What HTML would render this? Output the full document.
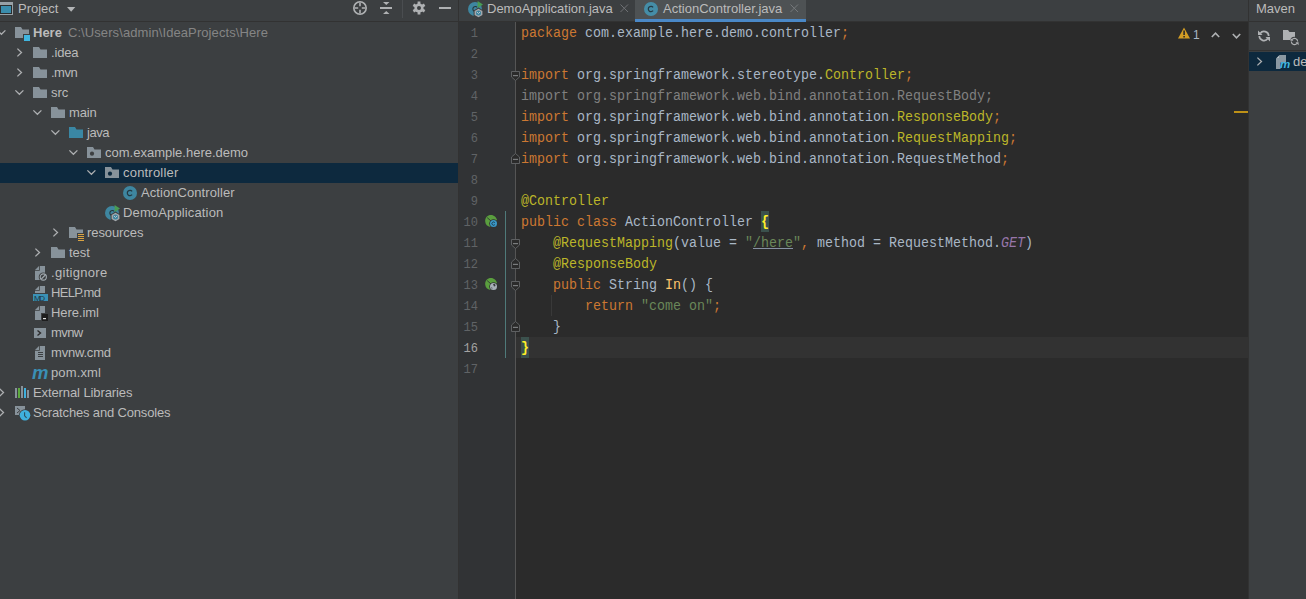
<!DOCTYPE html>
<html><head><meta charset="utf-8">
<style>
*{margin:0;padding:0;box-sizing:border-box}
html,body{width:1306px;height:599px;overflow:hidden;background:#3C3F41;font-family:"Liberation Sans",sans-serif;font-size:13px;color:#BBBBBB;position:relative}
.a{position:absolute}
.t{position:absolute;height:20px;line-height:20px;white-space:nowrap;color:#BBBBBB}
.vl{position:absolute;background:#323232;width:1px}
.hl{position:absolute;background:#323232;height:1px}
.code{position:absolute;left:521px;transform-origin:0 4.5px;transform:scaleY(1.13);font-family:"Liberation Mono",monospace;font-size:13.333px;white-space:pre;height:21px;line-height:21px;color:#A9B7C6}
.ln{position:absolute;left:459px;width:19px;padding-top:2px;text-align:right;font-family:"Liberation Mono",monospace;font-size:12px;height:21px;line-height:21px;color:#606366}
.k{color:#CC7832}.an{color:#BBB529}.s{color:#6A8759}.g{color:#808080}.m{color:#FFC66D}.st{color:#9876AA;font-style:italic}
u{text-decoration:underline}
</style></head><body>
<div class="hl" style="left:0;top:21px;width:458px"></div>
<div class="vl" style="left:458px;top:0;height:599px"></div>

<svg class="a" style="left:0;top:0" width="14" height="16"><rect x="0" y="2" width="13" height="13" fill="#97A0A6"/><rect x="0" y="5" width="12" height="9" fill="#2B2D2E"/><rect x="1" y="6" width="10" height="7" fill="#3A8DAD"/></svg>
<div class="a" style="left:18px;top:0;line-height:18px;color:#BBBBBB">Project</div>
<svg class="a" style="left:67px;top:7px" width="10" height="6"><path d="M0 0 H8.3 L4.15 4.7 Z" fill="#B2B4B6"/></svg>
<svg class="a" style="left:353px;top:1px" width="15" height="15"><circle cx="7" cy="7" r="6.2" fill="none" stroke="#AFB1B3" stroke-width="1.6"/><path d="M7 1.5 V5.2 M7 8.8 V12.5 M1.5 7 H5.2 M8.8 7 H12.5" stroke="#AFB1B3" stroke-width="1.6"/></svg>
<svg class="a" style="left:380px;top:0px" width="13" height="15"><rect x="0" y="7" width="12" height="2" fill="#AFB1B3"/><path d="M3 2 H9.5 L6.25 5 Z M3 14 H9.5 L6.25 11 Z" fill="#AFB1B3"/></svg>
<div class="a" style="left:402px;top:0;width:1px;height:18px;background:#4A4D50"></div>
<svg class="a" style="left:412px;top:1px" width="14" height="14"><g fill="#AFB1B3"><circle cx="7" cy="7" r="4.6"/><rect x="5.6" y="0.5" width="2.8" height="13"/><rect x="5.6" y="0.5" width="2.8" height="13" transform="rotate(60 7 7)"/><rect x="5.6" y="0.5" width="2.8" height="13" transform="rotate(120 7 7)"/></g><circle cx="7" cy="7" r="2" fill="#3C3F41"/></svg>
<div class="a" style="left:439px;top:7px;width:12px;height:2px;background:#AFB1B3"></div>

<svg class="a" style="left:-5px;top:29px" width="12" height="7"><path d="M2.4 1.4 L6.4 5.3 L10.4 1.4" fill="none" stroke="#AEB0B2" stroke-width="1.3"/></svg><svg class="a" style="left:15px;top:27px" width="16" height="14"><path d="M0 0 H6 L7.5 2.5 H14 V11 H0 Z" fill="#87929A"/><rect x="8" y="7" width="8" height="8" fill="#3C3F41"/><rect x="9" y="8" width="6" height="6" fill="#40B6E0"/></svg><div class="t" style="left:33px;top:23px;letter-spacing:0px"><b style="color:#BBBBBB">Here</b><span style="color:#858585;margin-left:6px;letter-spacing:0.09px">C:\Users\admin\IdeaProjects\Here</span></div>
<svg class="a" style="left:16px;top:47px" width="8" height="11"><path d="M1.4 1.6 L5.5 5.5 L1.4 9.4" fill="none" stroke="#AEB0B2" stroke-width="1.3"/></svg><svg class="a" style="left:33px;top:47px" width="16" height="14"><path d="M0 0 H6 L7.5 2.5 H14 V11 H0 Z" fill="#87929A"/></svg><div class="t" style="left:51px;top:43px;letter-spacing:-0.15px">.idea</div>
<svg class="a" style="left:16px;top:67px" width="8" height="11"><path d="M1.4 1.6 L5.5 5.5 L1.4 9.4" fill="none" stroke="#AEB0B2" stroke-width="1.3"/></svg><svg class="a" style="left:33px;top:67px" width="16" height="14"><path d="M0 0 H6 L7.5 2.5 H14 V11 H0 Z" fill="#87929A"/></svg><div class="t" style="left:51px;top:63px;letter-spacing:-0.5px">.mvn</div>
<svg class="a" style="left:13px;top:89px" width="12" height="7"><path d="M2.4 1.4 L6.4 5.3 L10.4 1.4" fill="none" stroke="#AEB0B2" stroke-width="1.3"/></svg><svg class="a" style="left:33px;top:87px" width="16" height="14"><path d="M0 0 H6 L7.5 2.5 H14 V11 H0 Z" fill="#87929A"/></svg><div class="t" style="left:51px;top:83px;letter-spacing:0px">src</div>
<svg class="a" style="left:31px;top:109px" width="12" height="7"><path d="M2.4 1.4 L6.4 5.3 L10.4 1.4" fill="none" stroke="#AEB0B2" stroke-width="1.3"/></svg><svg class="a" style="left:51px;top:107px" width="16" height="14"><path d="M0 0 H6 L7.5 2.5 H14 V11 H0 Z" fill="#87929A"/></svg><div class="t" style="left:69px;top:103px;letter-spacing:-0.13px">main</div>
<svg class="a" style="left:49px;top:129px" width="12" height="7"><path d="M2.4 1.4 L6.4 5.3 L10.4 1.4" fill="none" stroke="#AEB0B2" stroke-width="1.3"/></svg><svg class="a" style="left:69px;top:127px" width="16" height="14"><path d="M0 0 H6 L7.5 2.5 H14 V11 H0 Z" fill="#3A87A4"/></svg><div class="t" style="left:87px;top:123px;letter-spacing:-0.43px">java</div>
<svg class="a" style="left:67px;top:149px" width="12" height="7"><path d="M2.4 1.4 L6.4 5.3 L10.4 1.4" fill="none" stroke="#AEB0B2" stroke-width="1.3"/></svg><svg class="a" style="left:87px;top:147px" width="16" height="14"><path d="M0 0 H6 L7.5 2.5 H14 V11 H0 Z" fill="#87929A"/><circle cx="5" cy="6.7" r="2.1" fill="#3C3F41"/></svg><div class="t" style="left:105px;top:143px;letter-spacing:0px">com.example.here.demo</div>
<div class="a" style="left:0;top:163px;width:458px;height:20px;background:#0D293E"></div><svg class="a" style="left:85px;top:169px" width="12" height="7"><path d="M2.4 1.4 L6.4 5.3 L10.4 1.4" fill="none" stroke="#AEB0B2" stroke-width="1.3"/></svg><svg class="a" style="left:105px;top:167px" width="16" height="14"><path d="M0 0 H6 L7.5 2.5 H14 V11 H0 Z" fill="#87929A"/><circle cx="5" cy="6.7" r="2.1" fill="#0D293E"/></svg><div class="t" style="left:123px;top:163px;letter-spacing:0.2px">controller</div>
<svg class="a" style="left:123px;top:186px" width="14" height="14"><circle cx="7" cy="7" r="7" fill="#40B6E0" fill-opacity="0.6"/><path d="M9.1 5.3 A2.7 2.7 0 1 0 9.1 8.7" fill="none" stroke="#1F2C33" stroke-opacity="0.85" stroke-width="1.2"/></svg><div class="t" style="left:141px;top:183px;letter-spacing:0.07px">ActionController</div>
<svg class="a" style="left:105px;top:205px" width="18" height="18"><circle cx="7" cy="8" r="7" fill="#40B6E0" fill-opacity="0.6"/><path d="M9.2 6.3 A2.5 2.5 0 1 0 9.2 9.7" fill="none" stroke="#253539" stroke-width="1.1"/><path d="M9.6 0 L15 3.6 L9.6 7.2 Z" fill="#499C54"/><path d="M10.5 6.6 L15.4 9.4 L15.4 14.6 L10.5 17.4 L5.6 14.6 L5.6 9.4 Z" fill="#3C3F41"/><path d="M10.5 7.8 L14.4 10 L14.4 14 L10.5 16.2 L6.6 14 L6.6 10 Z" fill="#A3A8AC"/><circle cx="10.5" cy="12" r="2.5" fill="#3D85A0"/><path d="M9 11 Q10.5 14 12 11" fill="none" stroke="#C9CDD0" stroke-width="0.9"/></svg><div class="t" style="left:123px;top:203px;letter-spacing:0.14px">DemoApplication</div>
<svg class="a" style="left:52px;top:227px" width="8" height="11"><path d="M1.4 1.6 L5.5 5.5 L1.4 9.4" fill="none" stroke="#AEB0B2" stroke-width="1.3"/></svg><svg class="a" style="left:69px;top:227px" width="16" height="14"><path d="M0 0 H6 L7.5 2.5 H14 V11 H0 Z" fill="#87929A"/><rect x="8" y="6" width="8" height="8" fill="#3C3F41"/><path d="M9 7.5 H15 M9 9.5 H15 M9 11.5 H15 M9 13.5 H15" stroke="#D9A343" stroke-width="1"/></svg><div class="t" style="left:87px;top:223px;letter-spacing:-0.08px">resources</div>
<svg class="a" style="left:34px;top:247px" width="8" height="11"><path d="M1.4 1.6 L5.5 5.5 L1.4 9.4" fill="none" stroke="#AEB0B2" stroke-width="1.3"/></svg><svg class="a" style="left:51px;top:247px" width="16" height="14"><path d="M0 0 H6 L7.5 2.5 H14 V11 H0 Z" fill="#87929A"/></svg><div class="t" style="left:69px;top:243px;letter-spacing:0px">test</div>
<svg class="a" style="left:35px;top:266px" width="16" height="16"><path d="M0 4 L4 0 V4 Z" fill="#87929A"/><path d="M4.8 0 H10 V14 H0 V4.8 H4.8 Z" fill="#87929A"/><circle cx="8.3" cy="11" r="4.6" fill="#3C3F41"/><circle cx="8.3" cy="11" r="3.1" fill="none" stroke="#A0A8AE" stroke-width="1.1"/><path d="M6.3 13 L10.3 9" stroke="#A0A8AE" stroke-width="1.1"/></svg><div class="t" style="left:51px;top:263px;letter-spacing:0.3px">.gitignore</div>
<svg class="a" style="left:35px;top:286px" width="16" height="16"><path d="M0 4 L4 0 V4 Z" fill="#87929A"/><path d="M4.8 0 H10 V14 H0 V4.8 H4.8 Z" fill="#87929A"/><rect x="-2" y="7" width="16" height="9" fill="#3C3F41"/></svg><svg class="a" style="left:33px;top:294px" width="16" height="8"><rect x="0" y="0" width="15" height="7" fill="#3A91B6"/><text x="1" y="6.6" font-size="8" font-family="Liberation Sans" fill="#1D3440" textLength="11">MD</text></svg><div class="t" style="left:51px;top:283px;letter-spacing:-0.67px">HELP.md</div>
<svg class="a" style="left:35px;top:306px" width="16" height="16"><path d="M0 4 L4 0 V4 Z" fill="#87929A"/><path d="M4.8 0 H10 V14 H0 V4.8 H4.8 Z" fill="#87929A"/><rect x="6" y="7" width="8" height="9" fill="#3C3F41"/><rect x="7" y="8" width="6" height="7" fill="#1E1E1E"/><rect x="8" y="12" width="3" height="1.2" fill="#E0E0E0"/></svg><div class="t" style="left:51px;top:303px;letter-spacing:-0.08px">Here.iml</div>
<svg class="a" style="left:34px;top:328px" width="14" height="12"><rect x="0" y="0" width="12" height="10" fill="#87929A"/><path d="M3.5 2.5 L6.5 5 L3.5 7.5" fill="none" stroke="#2B2B2B" stroke-width="1.4"/></svg><div class="t" style="left:51px;top:323px;letter-spacing:-0.57px">mvnw</div>
<svg class="a" style="left:35px;top:346px" width="16" height="16"><path d="M0 4 L4 0 V4 Z" fill="#87929A"/><path d="M4.8 0 H10 V14 H0 V4.8 H4.8 Z" fill="#87929A"/><path d="M3 6.5 H8 M3 8.5 H8 M3 10.5 H8" stroke="#3C3F41" stroke-width="1"/></svg><div class="t" style="left:51px;top:343px;letter-spacing:-0.2px">mvnw.cmd</div>
<div class="a" style="left:32px;top:363px;font-family:'Liberation Sans';font-style:italic;font-weight:bold;font-size:18.5px;line-height:20px;color:#3A8FB5">m</div><div class="t" style="left:51px;top:363px;letter-spacing:0.12px">pom.xml</div>
<svg class="a" style="left:-2px;top:387px" width="8" height="11"><path d="M1.4 1.6 L5.5 5.5 L1.4 9.4" fill="none" stroke="#AEB0B2" stroke-width="1.3"/></svg><svg class="a" style="left:15px;top:386px" width="16" height="14"><rect x="0" y="2" width="2" height="10" fill="#87929A"/><rect x="3" y="2" width="2" height="10" fill="#5DAA3E"/><rect x="6" y="0" width="2" height="12" fill="#87929A"/><rect x="9" y="2" width="2" height="10" fill="#3FB0DD"/><rect x="12" y="4" width="2" height="8" fill="#87929A"/></svg><div class="t" style="left:33px;top:383px;letter-spacing:-0.1px">External Libraries</div>
<svg class="a" style="left:-2px;top:407px" width="8" height="11"><path d="M1.4 1.6 L5.5 5.5 L1.4 9.4" fill="none" stroke="#AEB0B2" stroke-width="1.3"/></svg><svg class="a" style="left:15px;top:405px" width="17" height="17"><rect x="0" y="1" width="10" height="9" fill="#87929A"/><path d="M2 3 L5 5.5 L2 8" fill="none" stroke="#3C3F41" stroke-width="1"/><circle cx="10" cy="10.3" r="6.1" fill="#3C3F41"/><circle cx="10" cy="10.3" r="5.3" fill="#3FB0DD"/><path d="M9.6 7.3 V10.8 L11.6 12.8" fill="none" stroke="#2B4F5E" stroke-width="1.1"/></svg><div class="t" style="left:33px;top:403px;letter-spacing:-0.16px">Scratches and Consoles</div>
<div class="a" style="left:459px;top:0;width:789px;height:21px;background:#3C3F41"></div>
<div class="hl" style="left:459px;top:21px;width:789px"></div>

<div class="a" style="left:635px;top:0;width:171px;height:19px;background:#4E5254"></div>
<div class="a" style="left:635px;top:19px;width:171px;height:3px;background:#4A88C7"></div>
<svg class="a" style="left:468px;top:1px" width="18" height="18"><circle cx="7" cy="8" r="7" fill="#40B6E0" fill-opacity="0.6"/><path d="M9.2 6.3 A2.5 2.5 0 1 0 9.2 9.7" fill="none" stroke="#253539" stroke-width="1.1"/><path d="M9.6 0 L15 3.6 L9.6 7.2 Z" fill="#499C54"/><path d="M10.5 6.6 L15.4 9.4 L15.4 14.6 L10.5 17.4 L5.6 14.6 L5.6 9.4 Z" fill="#3C3F41"/><path d="M10.5 7.8 L14.4 10 L14.4 14 L10.5 16.2 L6.6 14 L6.6 10 Z" fill="#A3A8AC"/><circle cx="10.5" cy="12" r="2.5" fill="#3D85A0"/><path d="M9 11 Q10.5 14 12 11" fill="none" stroke="#C9CDD0" stroke-width="0.9"/></svg>
<div class="a" style="left:487px;top:0;line-height:18px;color:#BBBBBB">DemoApplication.java</div>
<svg class="a" style="left:620px;top:4px" width="9" height="9"><path d="M0.5 0.5 L8 8 M8 0.5 L0.5 8" stroke="#6E7174" stroke-width="1"/></svg>
<svg class="a" style="left:644px;top:2px" width="14" height="14"><circle cx="7" cy="7" r="7" fill="#40B6E0" fill-opacity="0.6"/><path d="M9.1 5.3 A2.7 2.7 0 1 0 9.1 8.7" fill="none" stroke="#1F2C33" stroke-opacity="0.85" stroke-width="1.2"/></svg>
<div class="a" style="left:663px;top:0;line-height:18px;color:#BBBBBB">ActionController.java</div>
<svg class="a" style="left:790px;top:4px" width="9" height="9"><path d="M0.5 0.5 L8 8 M8 0.5 L0.5 8" stroke="#75787B" stroke-width="1"/></svg>

<div class="a" style="left:459px;top:22px;width:56px;height:577px;background:#313335"></div>
<div class="a" style="left:515px;top:22px;width:1px;height:577px;background:#555555"></div>
<div class="a" style="left:516px;top:22px;width:732px;height:577px;background:#2B2B2B"></div>
<div class="a" style="left:516px;top:337px;width:732px;height:21px;background:#323232"></div>
<div class="a" style="left:521px;top:337px;width:8px;height:21px;background:#3B514D"></div>

<div class="a" style="left:505px;top:211px;width:1px;height:147px;background:#4F7A7A"></div>
<div class="a" style="left:551px;top:295px;width:1px;height:21px;background:#393939"></div>
<div class="a" style="left:761px;top:211px;width:8px;height:21px;background:#3B514D"></div>
<div class="a" style="left:753px;top:248px;width:40px;height:1px;background:#8791A3;z-index:5"></div>

<svg class="a" style="left:511px;top:71px" width="10" height="12"><path d="M0.5 0.5 H8.5 V6 L4.5 9.5 L0.5 6 Z" fill="#2B2B2B" stroke="#5E6062" stroke-width="1"/><rect x="2" y="4" width="5" height="1.2" fill="#7A7C7E"/></svg>
<svg class="a" style="left:511px;top:153px" width="10" height="12"><path d="M0.5 10.5 H8.5 V4 L4.5 0.5 L0.5 4 Z" fill="#2B2B2B" stroke="#5E6062" stroke-width="1"/><rect x="2" y="5.8" width="5" height="1.2" fill="#7A7C7E"/></svg>
<svg class="a" style="left:511px;top:239px" width="10" height="12"><path d="M0.5 0.5 H8.5 V6 L4.5 9.5 L0.5 6 Z" fill="#2B2B2B" stroke="#5E6062" stroke-width="1"/><rect x="2" y="4" width="5" height="1.2" fill="#7A7C7E"/></svg>
<svg class="a" style="left:511px;top:258px" width="10" height="12"><path d="M0.5 10.5 H8.5 V4 L4.5 0.5 L0.5 4 Z" fill="#2B2B2B" stroke="#5E6062" stroke-width="1"/><rect x="2" y="5.8" width="5" height="1.2" fill="#7A7C7E"/></svg>
<svg class="a" style="left:511px;top:281px" width="10" height="12"><path d="M0.5 0.5 H8.5 V6 L4.5 9.5 L0.5 6 Z" fill="#2B2B2B" stroke="#5E6062" stroke-width="1"/><rect x="2" y="4" width="5" height="1.2" fill="#7A7C7E"/></svg>
<svg class="a" style="left:511px;top:321px" width="10" height="12"><path d="M0.5 10.5 H8.5 V4 L4.5 0.5 L0.5 4 Z" fill="#2B2B2B" stroke="#5E6062" stroke-width="1"/><rect x="2" y="5.8" width="5" height="1.2" fill="#7A7C7E"/></svg>

<svg class="a" style="left:482px;top:212px" width="18" height="18"><path d="M3.2 9.5 C3 5.5 5.5 3 9 3 C12 3 14.5 5.5 15 8 L8.5 15 C5.5 14.5 3.3 12.5 3.2 9.5 Z" fill="#5A9E3E"/><path d="M5.2 5.6 L9 9" stroke="#313335" stroke-width="0.9"/><circle cx="11.5" cy="11.6" r="4.3" fill="#313335"/><circle cx="11.5" cy="11.6" r="3.5" fill="#3A97C6"/><path d="M12.8 10.6 A1.6 1.6 0 1 0 12.8 12.6" fill="none" stroke="#1E3F50" stroke-width="1"/></svg>
<svg class="a" style="left:482px;top:275px" width="18" height="18"><path d="M3.2 9.5 C3 5.5 5.5 3 9 3 C12 3 14.5 5.5 15 8 L8.5 15 C5.5 14.5 3.3 12.5 3.2 9.5 Z" fill="#5A9E3E"/><path d="M5.2 5.6 L9 9" stroke="#313335" stroke-width="0.9"/><circle cx="11.5" cy="11.6" r="4.3" fill="#313335"/><circle cx="11.5" cy="11.6" r="3.5" fill="#A7B0B8"/><path d="M11 9 L13 8.8 L13.5 11 L12 11.5 Z M9 12 L10.5 13 L10 14 Z" fill="#3A3D40"/></svg>

<div class="code" style="top:22px"><span class="k">package</span> com.example.here.demo.controller<span class="k">;</span></div>
<div class="ln" style="top:22px;color:#606366">1</div>
<div class="code" style="top:43px"></div>
<div class="ln" style="top:43px;color:#606366">2</div>
<div class="code" style="top:64px"><span class="k">import</span> org.springframework.stereotype.<span class="an">Controller</span><span class="k">;</span></div>
<div class="ln" style="top:64px;color:#606366">3</div>
<div class="code" style="top:85px"><span class="g">import org.springframework.web.bind.annotation.RequestBody;</span></div>
<div class="ln" style="top:85px;color:#606366">4</div>
<div class="code" style="top:106px"><span class="k">import</span> org.springframework.web.bind.annotation.<span class="an">ResponseBody</span><span class="k">;</span></div>
<div class="ln" style="top:106px;color:#606366">5</div>
<div class="code" style="top:127px"><span class="k">import</span> org.springframework.web.bind.annotation.<span class="an">RequestMapping</span><span class="k">;</span></div>
<div class="ln" style="top:127px;color:#606366">6</div>
<div class="code" style="top:148px"><span class="k">import</span> org.springframework.web.bind.annotation.RequestMethod<span class="k">;</span></div>
<div class="ln" style="top:148px;color:#606366">7</div>
<div class="code" style="top:169px"></div>
<div class="ln" style="top:169px;color:#606366">8</div>
<div class="code" style="top:190px"><span class="an">@Controller</span></div>
<div class="ln" style="top:190px;color:#606366">9</div>
<div class="code" style="top:211px"><span class="k">public class</span> ActionController <span style="color:#FFEF28;font-weight:bold">{</span></div>
<div class="ln" style="top:211px;color:#606366">10</div>
<div class="code" style="top:232px">    <span class="an">@RequestMapping</span>(value = <span class="s">"/here"</span><span class="k">,</span> method = RequestMethod.<span class="st">GET</span>)</div>
<div class="ln" style="top:232px;color:#606366">11</div>
<div class="code" style="top:253px">    <span class="an">@ResponseBody</span></div>
<div class="ln" style="top:253px;color:#606366">12</div>
<div class="code" style="top:274px">    <span class="k">public</span> String <span class="m">In</span>() {</div>
<div class="ln" style="top:274px;color:#606366">13</div>
<div class="code" style="top:295px">        <span class="k">return</span> <span class="s">"come on"</span><span class="k">;</span></div>
<div class="ln" style="top:295px;color:#606366">14</div>
<div class="code" style="top:316px">    }</div>
<div class="ln" style="top:316px;color:#606366">15</div>
<div class="code" style="top:337px"><span style="color:#FFEF28;font-weight:bold">}</span></div>
<div class="ln" style="top:337px;color:#A4A3A3">16</div>
<div class="code" style="top:358px"></div>
<div class="ln" style="top:358px;color:#606366">17</div>

<svg class="a" style="left:1178px;top:27px" width="13" height="12"><path d="M6 0.5 L12 11.5 H0 Z" fill="#D39D24"/><rect x="5.3" y="3.5" width="1.6" height="4.5" fill="#2B2B2B"/><rect x="5.3" y="9" width="1.6" height="1.5" fill="#2B2B2B"/></svg>
<div class="a" style="left:1193px;top:26px;line-height:18px;color:#A9B7C6;font-size:12px">1</div>
<svg class="a" style="left:1211px;top:32px" width="9" height="6"><path d="M0.8 5 L4.5 1.2 L8.2 5" fill="none" stroke="#AFB1B3" stroke-width="1.6"/></svg>
<svg class="a" style="left:1232px;top:33px" width="9" height="6"><path d="M0.8 1 L4.5 4.8 L8.2 1" fill="none" stroke="#AFB1B3" stroke-width="1.6"/></svg>
<div class="a" style="left:1234px;top:111px;width:14px;height:2px;background:#BE9117"></div>

<div class="vl" style="left:1248px;top:0;height:599px"></div>
<div class="hl" style="left:1249px;top:21px;width:57px"></div>
<div class="hl" style="left:1249px;top:50px;width:57px"></div>
<div class="a" style="left:1249px;top:52px;width:57px;height:19px;background:#0D293E"></div>

<div class="a" style="left:1256px;top:0;line-height:18px;color:#BBBBBB">Maven</div>
<svg class="a" style="left:1255px;top:27px" width="18" height="18"><g fill="none" stroke="#AFB1B3" stroke-width="1.7"><path d="M5.2 6.4 A4.7 4.7 0 0 1 13.7 9"/><path d="M4.3 9 A4.7 4.7 0 0 0 12.8 11.6"/></g><path d="M3 3.5 V8 H7.5 Z M15 14.5 V10 H10.5 Z" fill="#AFB1B3"/></svg>
<svg class="a" style="left:1283px;top:30px" width="16" height="16"><path d="M0 0 H5 L6.5 2 H12 V10 H0 Z" fill="#AFB1B3"/><circle cx="11.5" cy="11.5" r="4.8" fill="#3C3F41"/><g transform="translate(11.5 11.5) scale(0.68) translate(-9 -9)"><g fill="none" stroke="#AFB1B3" stroke-width="1.7"><path d="M5.2 6.4 A4.7 4.7 0 0 1 13.7 9"/><path d="M4.3 9 A4.7 4.7 0 0 0 12.8 11.6"/></g><path d="M3 3.5 V8 H7.5 Z M15 14.5 V10 H10.5 Z" fill="#AFB1B3"/></g></svg>
<svg class="a" style="left:1256px;top:56px" width="8" height="11"><path d="M1.4 1.6 L5.5 5.5 L1.4 9.4" fill="none" stroke="#AEB0B2" stroke-width="1.3"/></svg>
<svg class="a" style="left:1276px;top:55px" width="16" height="15"><path d="M3.5 0 H10 V7.5 H4.5 V14 H0 V3.5 Z" fill="#8A98A2"/><path d="M0.8 3 L3 0.8 V3 Z" fill="#B5BCC1"/></svg>
<div class="a" style="left:1280px;top:58px;font-style:italic;font-weight:bold;font-size:11.5px;line-height:12px;color:#40B6E0">m</div>
<div class="a" style="left:1293px;top:53px;line-height:18px;color:#BBBBBB">de</div>

</body></html>
